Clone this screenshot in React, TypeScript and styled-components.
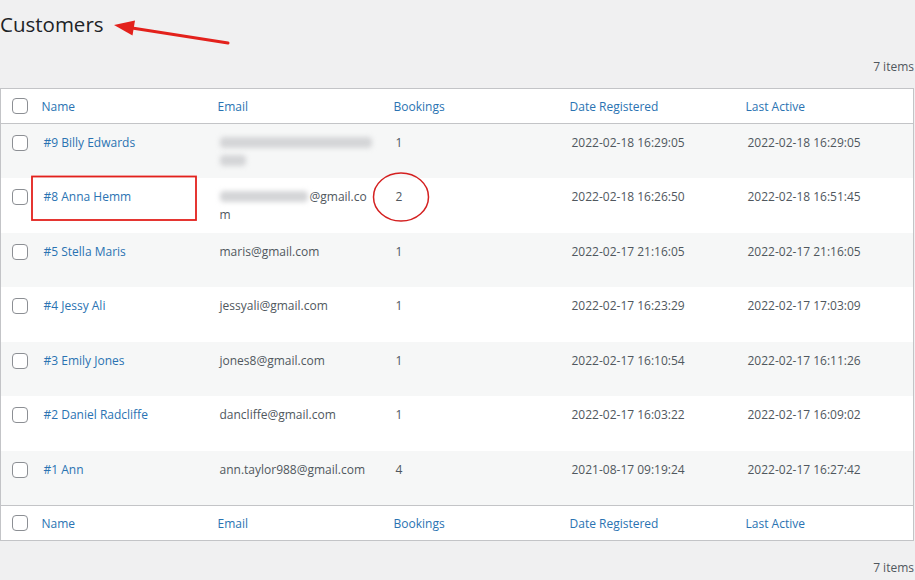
import React from "react";
import styled, { createGlobalStyle } from "styled-components";

const Global = createGlobalStyle`
  html, body { margin: 0; padding: 0; background: #f0f0f1; }
  body { font-family: "Open Sans", "Noto Sans", sans-serif; color: #50575e; }
`;

const Page = styled.div`
  position: relative;
  width: 915px;
  height: 580px;
  overflow: hidden;
`;

const Title = styled.h1`
  margin: 0;
  padding-top: 10px;
  font-size: 20.5px;
  font-weight: 400;
  line-height: 29px;
  color: #1d2327;
`;

const TableNav = styled.div<{ $h: number; $pt?: number }>`
  display: flex;
  justify-content: flex-end;
  align-items: center;
  box-sizing: border-box;
  height: ${(p) => p.$h}px;
  padding-top: ${(p) => p.$pt ?? 0}px;
  font-size: 12px;
  color: #50575e;
  padding-right: 1px;
`;

const Table = styled.table`
  width: 914px;
  border-collapse: collapse;
  border: 1px solid #c3c4c7;
  background: #fff;
  table-layout: fixed;
  font-size: 12px;
`;

const HeadRow = styled.tr<{ $foot?: boolean }>`
  height: 35px;
  border-bottom: ${(p) => (p.$foot ? "none" : "1px solid #c3c4c7")};
  border-top: ${(p) => (p.$foot ? "1px solid #c3c4c7" : "none")};
`;

const Th = styled.th`
  text-align: left;
  font-weight: 400;
  padding: 0 8px;
  color: #2a73b2;
  font-size: 12px;
`;

const CheckTh = styled.th`
  width: 33px;
  padding: 0 0 0 11px;
  text-align: left;
  box-sizing: border-box;
`;

const Row = styled.tr<{ $alt: boolean }>`
  height: 54.6px;
  background: ${(p) => (p.$alt ? "#f6f7f7" : "#fff")};
`;

const Td = styled.td`
  vertical-align: top;
  padding: 10px 12px 0 10px;
  line-height: 18px;
  color: #50575e;
  word-break: break-all;
`;

const CheckTd = styled.td`
  vertical-align: top;
  padding: 11px 0 0 11px;
`;

const Box = styled.span`
  display: block;
  width: 14px;
  height: 14px;
  border: 1px solid #8c8f94;
  border-radius: 4px;
  background: #fff;
`;

const NameLink = styled.a`
  color: #2a73b2;
  text-decoration: none;
`;

const Smudge = styled.span<{ $w: number }>`
  display: inline-block;
  vertical-align: middle;
  width: ${(p) => p.$w}px;
  height: 11px;
  margin: 0 2px 3px 0;
  background: #d4d5d7;
  border-radius: 4px;
  filter: blur(2.8px);
`;

const Overlay = styled.svg`
  position: absolute;
  left: 0;
  top: 0;
  pointer-events: none;
`;

type Customer = {
  name: string;
  email: React.ReactNode;
  bookings: number;
  reg: string;
  last: string;
};

const customers: Customer[] = [
  {
    name: "#9 Billy Edwards",
    email: (
      <>
        <Smudge $w={152} />
        <Smudge $w={26} />
      </>
    ),
    bookings: 1,
    reg: "2022-02-18 16:29:05",
    last: "2022-02-18 16:29:05",
  },
  {
    name: "#8 Anna Hemm",
    email: (
      <>
        <Smudge $w={88} />
        @gmail.com
      </>
    ),
    bookings: 2,
    reg: "2022-02-18 16:26:50",
    last: "2022-02-18 16:51:45",
  },
  { name: "#5 Stella Maris", email: "maris@gmail.com", bookings: 1, reg: "2022-02-17 21:16:05", last: "2022-02-17 21:16:05" },
  { name: "#4 Jessy Ali", email: "jessyali@gmail.com", bookings: 1, reg: "2022-02-17 16:23:29", last: "2022-02-17 17:03:09" },
  { name: "#3 Emily Jones", email: "jones8@gmail.com", bookings: 1, reg: "2022-02-17 16:10:54", last: "2022-02-17 16:11:26" },
  { name: "#2 Daniel Radcliffe", email: "dancliffe@gmail.com", bookings: 1, reg: "2022-02-17 16:03:22", last: "2022-02-17 16:09:02" },
  { name: "#1 Ann", email: "ann.taylor988@gmail.com", bookings: 4, reg: "2021-08-17 09:19:24", last: "2022-02-17 16:27:42" },
];

const Header = ({ foot }: { foot?: boolean }) => (
  <HeadRow $foot={foot}>
    <CheckTh>
      <Box />
    </CheckTh>
    <Th>Name</Th>
    <Th>Email</Th>
    <Th>Bookings</Th>
    <Th>Date Registered</Th>
    <Th>Last Active</Th>
  </HeadRow>
);

export default function App() {
  return (
    <Page>
      <Global />
      <Title>Customers</Title>
      <TableNav $h={49} $pt={6}>7 items</TableNav>
      <Table>
        <thead>
          <Header />
        </thead>
        <tbody>
          {customers.map((c, i) => (
            <Row key={c.name} $alt={i % 2 === 0}>
              <CheckTd>
                <Box />
              </CheckTd>
              <Td>
                <NameLink href="#">{c.name}</NameLink>
              </Td>
              <Td>{c.email}</Td>
              <Td>{c.bookings}</Td>
              <Td>{c.reg}</Td>
              <Td>{c.last}</Td>
            </Row>
          ))}
        </tbody>
        <tfoot>
          <Header foot />
        </tfoot>
      </Table>
      <TableNav $h={52}>7 items</TableNav>
      <Overlay width="915" height="580" viewBox="0 0 915 580">
        <line x1="228" y1="43" x2="132" y2="28" stroke="#e3211c" strokeWidth="3" strokeLinecap="round" />
        <polygon points="114,25 135,20.5 132.5,35.5" fill="#e3211c" />
        <rect x="32" y="176.5" width="164" height="43.5" fill="none" stroke="#e3211c" strokeWidth="1.8" />
        <ellipse cx="401" cy="197" rx="27.5" ry="24" fill="none" stroke="#d42020" strokeWidth="1.5" />
      </Overlay>
    </Page>
  );
}
